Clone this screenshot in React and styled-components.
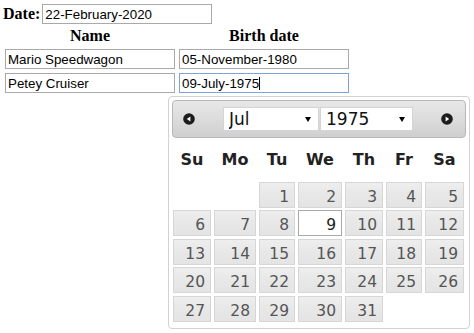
import React from 'react';
import styled, { createGlobalStyle } from 'styled-components';

const GlobalStyle = createGlobalStyle`
  html, body {
    margin: 0;
    background: #fff;
    font-family: "Liberation Serif", serif;
  }
`;

const PageSC = styled('div')`
  min-height: 333px;
  box-sizing: border-box;
  padding: 4px 0 0 3px;
`;

const DateRowSC = styled('div')`
  display: flex;
  align-items: baseline;
  gap: 2px;
  margin-bottom: 3px;
`;

const LabelSC = styled('b')`
  font-size: 16px;
  color: #000;
`;

const TextInputSC = styled('input')`
  box-sizing: border-box;
  width: 170px;
  height: 20px;
  padding: 1px 2px;
  margin: 0;
  border: 1px solid ${(props) => (props.$focused ? '#7ea3d8' : '#a9a9a9')};
  font-family: "Liberation Sans", Arial, sans-serif;
  font-size: 13.33px;
  color: #000;
  background: #fff;
  outline: none;
`;

const PeopleGridSC = styled('div')`
  display: grid;
  grid-template-columns: 170px 170px;
  column-gap: 4px;
  row-gap: 4px;
  margin-left: 2px;
`;

const HeadCellSC = styled('div')`
  text-align: center;
  font-weight: bold;
  font-size: 16px;
  line-height: 18px;
`;

const AnchorSC = styled('div')`
  position: relative;
`;

const CaretSC = styled('span')`
  position: absolute;
  left: 80px;
  top: 4px;
  width: 1px;
  height: 13px;
  background: #000;
`;

const PopupSC = styled('div')`
  position: absolute;
  top: 23px;
  left: -11px;
  width: 302px;
  box-sizing: border-box;
  padding: 3px 3px 6px;
  border: 1px solid #d2d2d2;
  border-radius: 4px;
  background: #fff;
  font-family: "DejaVu Sans", Verdana, sans-serif;
  z-index: 10;
`;

const HeaderSC = styled('div')`
  display: flex;
  align-items: center;
  height: 38px;
  box-sizing: border-box;
  border: 1px solid #b8b8b8;
  border-radius: 4px;
  background: linear-gradient(#e8e8e8, #dcdcdc 50%, #cfcfcf);
`;

const NavSC = styled('span')`
  display: flex;
  align-items: center;
  justify-content: center;
  width: 22px;
  height: 22px;
  margin-left: ${(props) => (props.$next ? 'auto' : '5px')};
  margin-right: ${(props) => (props.$next ? '7px' : '0')};
  cursor: pointer;
`;

const SelectGroupSC = styled('div')`
  display: flex;
  gap: 1px;
  margin-left: 23px;
`;

const SelectWrapSC = styled('div')`
  position: relative;
  width: ${(props) => props.$width}px;
  &::after {
    content: "";
    position: absolute;
    right: 8px;
    top: 10px;
    border-left: 3.5px solid transparent;
    border-right: 3.5px solid transparent;
    border-top: 5px solid #000;
    pointer-events: none;
  }
`;

const SelectSC = styled('select')`
  appearance: none;
  width: 100%;
  height: 24px;
  box-sizing: border-box;
  margin: 0;
  padding: 0 0 0 5px;
  border: 1px solid #d4d4d4;
  border-radius: 0;
  background: #fff;
  font-family: "DejaVu Sans", Verdana, sans-serif;
  font-size: 17px;
  color: #111;
  outline: none;
`;

const CalendarGridSC = styled('div')`
  display: grid;
  grid-template-columns: 38px 42px 36px 44px 38px 36px 39px;
  column-gap: 3px;
  row-gap: 2.5px;
  margin-left: 1px;
`;

const DayNameSC = styled('div')`
  height: 41px;
  padding-top: 2px;
  box-sizing: border-box;
  display: flex;
  align-items: center;
  justify-content: center;
  font-weight: bold;
  font-size: 16px;
  color: #222;
`;

const DayCellSC = styled('div')`
  height: 26px;
  box-sizing: border-box;
  padding: 5px 5px 0 0;
  text-align: right;
  font-size: 15.5px;
  line-height: 19px;
  border: 1px solid ${(props) => (props.$active ? '#aaaaaa' : '#d6d6d6')};
  background: ${(props) =>
    props.$active ? '#fff' : 'linear-gradient(#eeeeee, #e8e8e8 45%, #e4e4e4)'};
  color: ${(props) => (props.$active ? '#212121' : '#555')};
  cursor: pointer;
`;

const EmptySC = styled('div')``;

const Arrow = ({ next }) => (
  <svg width="12" height="12" viewBox="0 0 12 12">
    <circle cx="6" cy="6" r="5.8" fill="#1c1c1c" />
    {next ? (
      <polygon points="4.6,3.4 8.2,6 4.6,8.6" fill="#fff" />
    ) : (
      <polygon points="7.4,3.4 3.8,6 7.4,8.6" fill="#fff" />
    )}
  </svg>
);

const months = ['Jan', 'Feb', 'Mar', 'Apr', 'May', 'Jun', 'Jul', 'Aug', 'Sep', 'Oct', 'Nov', 'Dec'];
const years = [1970, 1971, 1972, 1973, 1974, 1975, 1976, 1977, 1978, 1979, 1980];
const dayNames = ['Su', 'Mo', 'Tu', 'We', 'Th', 'Fr', 'Sa'];
const firstWeekday = 2;
const daysInMonth = 31;
const selectedDay = 9;

const App = () => {
  const cells = [];
  for (let i = 0; i < firstWeekday; i++) cells.push(null);
  for (let d = 1; d <= daysInMonth; d++) cells.push(d);

  return (
    <PageSC>
      <GlobalStyle />
      <DateRowSC>
        <LabelSC>Date:</LabelSC>
        <TextInputSC defaultValue="22-February-2020" />
      </DateRowSC>
      <PeopleGridSC>
        <HeadCellSC>Name</HeadCellSC>
        <HeadCellSC>Birth date</HeadCellSC>
        <TextInputSC defaultValue="Mario Speedwagon" />
        <TextInputSC defaultValue="05-November-1980" />
        <TextInputSC defaultValue="Petey Cruiser" />
        <AnchorSC>
          <TextInputSC $focused defaultValue="09-July-1975" />
          <CaretSC />
          <PopupSC>
            <HeaderSC>
              <NavSC>
                <Arrow />
              </NavSC>
              <SelectGroupSC>
                <SelectWrapSC $width={96}>
                  <SelectSC defaultValue="Jul">
                    {months.map((m) => (
                      <option key={m}>{m}</option>
                    ))}
                  </SelectSC>
                </SelectWrapSC>
                <SelectWrapSC $width={93}>
                  <SelectSC defaultValue="1975">
                    {years.map((y) => (
                      <option key={y}>{y}</option>
                    ))}
                  </SelectSC>
                </SelectWrapSC>
              </SelectGroupSC>
              <NavSC $next>
                <Arrow next />
              </NavSC>
            </HeaderSC>
            <CalendarGridSC>
              {dayNames.map((n) => (
                <DayNameSC key={n}>{n}</DayNameSC>
              ))}
              {cells.map((d, i) =>
                d ? (
                  <DayCellSC key={i} $active={d === selectedDay}>
                    {d}
                  </DayCellSC>
                ) : (
                  <EmptySC key={i} />
                )
              )}
            </CalendarGridSC>
          </PopupSC>
        </AnchorSC>
      </PeopleGridSC>
    </PageSC>
  );
};

export default App;
